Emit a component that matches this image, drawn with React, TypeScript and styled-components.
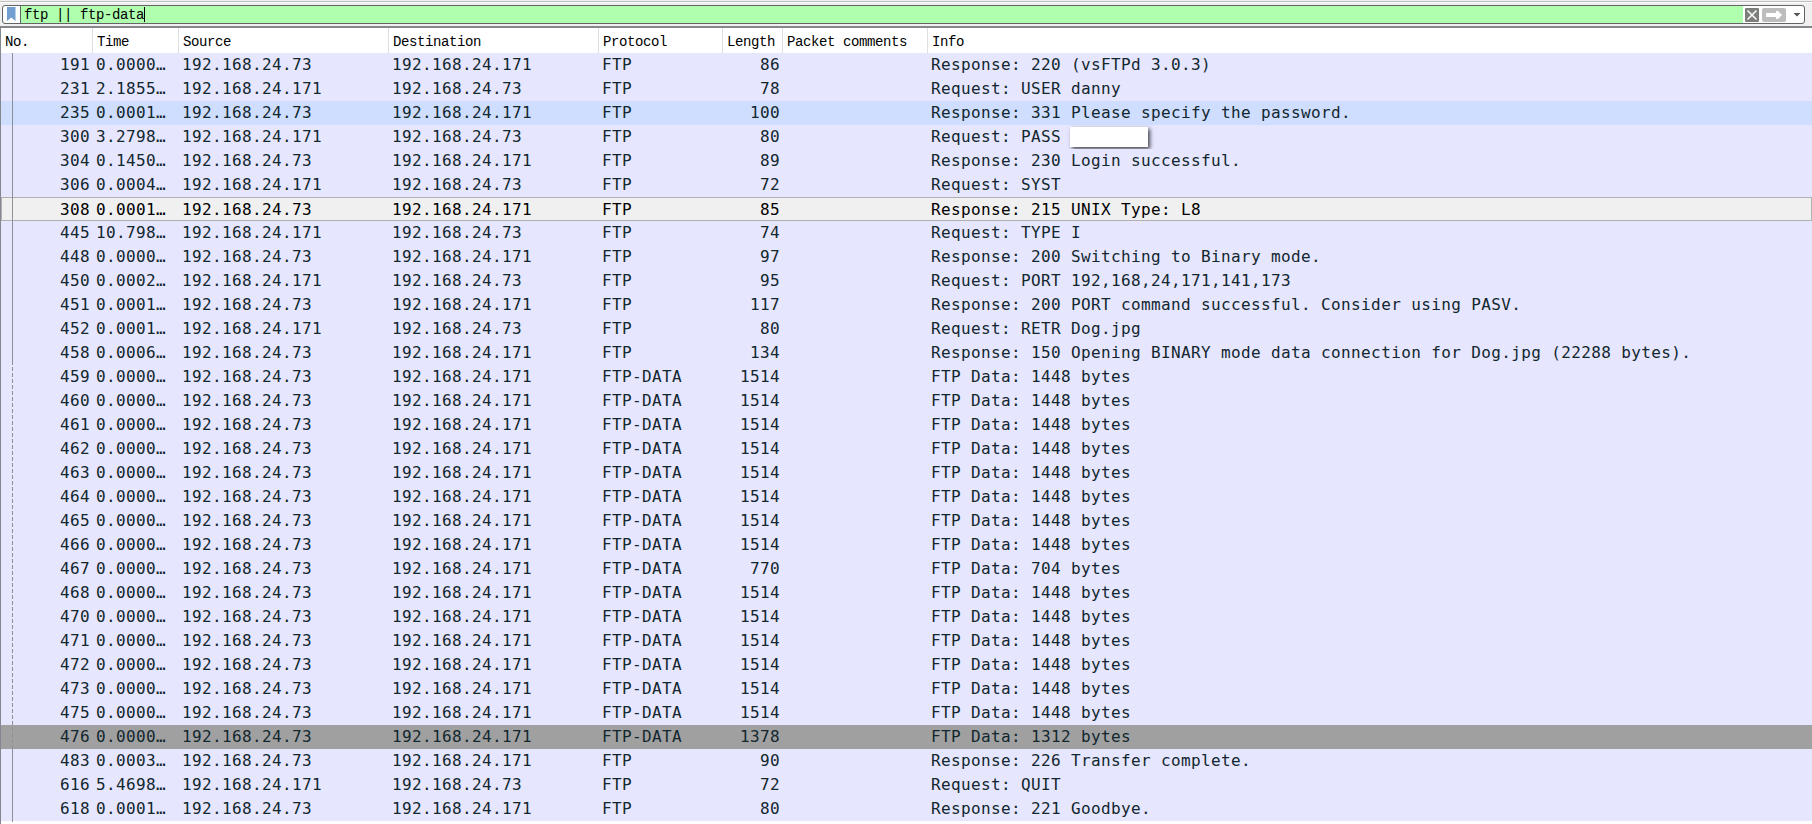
import React from "react";
import styled, { createGlobalStyle, css } from "styled-components";

const Global = createGlobalStyle`
  *, *::before, *::after { box-sizing: border-box; }
  html, body { margin: 0; background: #fff; overflow: hidden; }
`;

const Window = styled.div`
  width: 1812px;
  height: 824px;
  display: flex;
  flex-direction: column;
  overflow: hidden;
  background: #f0f0f0;
`;

const FilterToolbar = styled.div`
  flex: none;
  height: 26px;
  padding: 3px 7px 2px 2px;
  background: linear-gradient(#f0f0f0 0 1px, #c0c0c0 1px 2px, #fff 2px 3px, #f0f0f0 3px);
`;

const FilterBox = styled.div`
  height: 19px;
  margin-top: 2px;
  display: flex;
  align-items: stretch;
  border: 1px solid #646464;
  border-radius: 3px;
  background: #fff;
  overflow: hidden;
`;

const BookmarkButton = styled.div`
  width: 18px;
  padding: 1px 0 0 4px;
  border-right: 1px solid #646464;
  svg { display: block; }
`;

const FilterInput = styled.div`
  flex: 1;
  display: flex;
  align-items: center;
  padding-left: 3px;
  background: #afffaf;
  color: #000;
  font: 14px/17px "Liberation Mono", monospace;
  letter-spacing: -0.4px;
  white-space: pre;
`;

const FilterText = styled.span`
  padding-top: 1px;
`;

const Caret = styled.span`
  width: 1px;
  height: 15px;
  background: #000;
`;

const FilterActions = styled.div`
  display: flex;
  align-items: center;
  width: 61px;
  padding-left: 2px;
  svg { display: block; }
`;

const PacketTable = styled.div`
  flex: 1;
  display: flex;
  flex-direction: column;
  border-top: 2px solid #85878c;
  border-left: 1px solid #828790;
  background: #fff;
`;

const columns = "91px 86px 210px 210px 124px 60px 145px 1fr";

const HeaderRow = styled.div`
  flex: none;
  display: grid;
  grid-template-columns: ${columns};
  height: 25px;
`;

const HeaderCell = styled.div`
  height: 25px;
  padding: 1px 0 0 4px;
  border-left: 1px solid #e0e0e0;
  color: #000;
  font: 14px/27px "Liberation Mono", monospace;
  letter-spacing: -0.4px;
  white-space: pre;
  &:first-child { border-left: 0; }
`;

type Tone = "normal" | "related" | "current" | "marked";

const tones = {
  normal: css`background: #e6e6ff; color: #12272e;`,
  related: css`background: #cfdeff; color: #12272e;`,
  current: css`
    background: #f0f0f0;
    color: #000;
    box-shadow: inset 0 0 0 1px #b0b0b0;
    padding-top: 1px;
  `,
  marked: css`background: #a0a0a0; color: #12272e;`,
};

const PacketRow = styled.div<{ $tone: Tone }>`
  flex: none;
  display: grid;
  grid-template-columns: ${columns};
  height: 24px;
  font: 16px/23px "DejaVu Sans Mono", monospace;
  letter-spacing: 0.37px;
  white-space: pre;
  ${({ $tone }) => tones[$tone]}
`;

const Cell = styled.div<{ $right?: boolean }>`
  display: flex;
  align-items: flex-start;
  justify-content: ${({ $right }) => ($right ? "flex-end" : "flex-start")};
  padding: 0 2px 0 4px;
`;

const NumberCell = styled(Cell)<{ $dashed: boolean; $tone: Tone }>`
  margin-left: 11px;
  height: 24px;
  margin-top: ${({ $tone }) => ($tone === "current" ? "-1px" : "0")};
  padding-top: ${({ $tone }) => ($tone === "current" ? "1px" : "0")};
  background: ${({ $dashed }) =>
      $dashed
        ? "repeating-linear-gradient(transparent 0 2px, #8c9097 2px 6px)"
        : "linear-gradient(#8c9097, #8c9097)"}
    left top / 1px 100% no-repeat;
`;

const Redaction = styled.span`
  width: 78px;
  height: 20px;
  margin: 2px 0 0 -1px;
  background: #fff;
  box-shadow: 2px 2px 4px rgba(0, 0, 0, 0.7);
`;

const LineEnd = styled.div`
  width: 1px;
  height: 1px;
  margin-left: 11px;
  background: #8c9097;
`;

type Packet = [no: number, time: string, outgoing: boolean, proto: string, length: number, info: string];

const dataPacket = (no: number, length = 1514): Packet => [
  no, "0.0000…", true, "FTP-DATA", length, `FTP Data: ${length - 66} bytes`,
];

const packets: Packet[] = [
  [191, "0.0000…", true, "FTP", 86, "Response: 220 (vsFTPd 3.0.3)"],
  [231, "2.1855…", false, "FTP", 78, "Request: USER danny"],
  [235, "0.0001…", true, "FTP", 100, "Response: 331 Please specify the password."],
  [300, "3.2798…", false, "FTP", 80, "Request: PASS "],
  [304, "0.1450…", true, "FTP", 89, "Response: 230 Login successful."],
  [306, "0.0004…", false, "FTP", 72, "Request: SYST"],
  [308, "0.0001…", true, "FTP", 85, "Response: 215 UNIX Type: L8"],
  [445, "10.798…", false, "FTP", 74, "Request: TYPE I"],
  [448, "0.0000…", true, "FTP", 97, "Response: 200 Switching to Binary mode."],
  [450, "0.0002…", false, "FTP", 95, "Request: PORT 192,168,24,171,141,173"],
  [451, "0.0001…", true, "FTP", 117, "Response: 200 PORT command successful. Consider using PASV."],
  [452, "0.0001…", false, "FTP", 80, "Request: RETR Dog.jpg"],
  [458, "0.0006…", true, "FTP", 134, "Response: 150 Opening BINARY mode data connection for Dog.jpg (22288 bytes)."],
  ...[459, 460, 461, 462, 463, 464, 465, 466].map((no) => dataPacket(no)),
  dataPacket(467, 770),
  ...[468, 470, 471, 472, 473, 475].map((no) => dataPacket(no)),
  dataPacket(476, 1378),
  [483, "0.0003…", true, "FTP", 90, "Response: 226 Transfer complete."],
  [616, "5.4698…", false, "FTP", 72, "Request: QUIT"],
  [618, "0.0001…", true, "FTP", 80, "Response: 221 Goodbye."],
];

const SERVER = "192.168.24.73";
const CLIENT = "192.168.24.171";
const toneOf: Record<number, Tone> = { 235: "related", 308: "current", 476: "marked" };
const headings = ["No.", "Time", "Source", "Destination", "Protocol", "Length", "Packet comments", "Info"];

export default function App() {
  return (
    <Window>
      <Global />
      <FilterToolbar>
        <FilterBox>
          <BookmarkButton>
            <svg width="9" height="14" viewBox="0 0 9 14">
              <path d="M0 0H8.5V14L4.25 10.5L0 14Z" fill="#729fcf" />
            </svg>
          </BookmarkButton>
          <FilterInput>
            <FilterText>ftp || ftp-data</FilterText>
            <Caret />
          </FilterInput>
          <FilterActions>
            <svg width="56" height="14" viewBox="0 0 56 14">
              <rect width="14" height="14" rx="1" fill="#7d7f7b" />
              <path d="M2.5 2.5L11.5 11.5M11.5 2.5L2.5 11.5" stroke="#fff" strokeWidth="1.5" />
              <rect x="17" width="24" height="14" rx="2" fill="#bdbdbd" />
              <path d="M21 5H31V3H33L37 7L33 11H31V9H21Z" fill="#fff" />
              <path d="M48.5 5H55.5L52 8.5Z" fill="#555" />
            </svg>
          </FilterActions>
        </FilterBox>
      </FilterToolbar>
      <PacketTable>
        <HeaderRow>
          {headings.map((h) => (
            <HeaderCell key={h}>{h}</HeaderCell>
          ))}
        </HeaderRow>
        {packets.map(([no, time, outgoing, proto, length, info]) => {
          const tone = toneOf[no] ?? "normal";
          return (
            <PacketRow key={no} $tone={tone}>
              <NumberCell $right $tone={tone} $dashed={no >= 459 && no <= 476}>{no}</NumberCell>
              <Cell>{time}</Cell>
              <Cell>{outgoing ? SERVER : CLIENT}</Cell>
              <Cell>{outgoing ? CLIENT : SERVER}</Cell>
              <Cell>{proto}</Cell>
              <Cell $right>{length}</Cell>
              <Cell />
              <Cell>
                {info}
                {no === 300 && <Redaction />}
              </Cell>
            </PacketRow>
          );
        })}
        <LineEnd />
      </PacketTable>
    </Window>
  );
}
